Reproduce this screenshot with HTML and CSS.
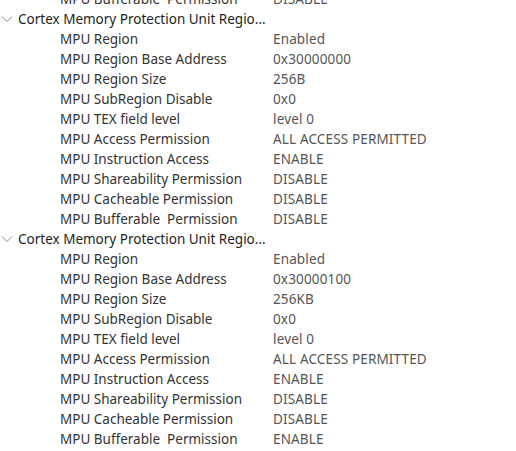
FILE: index.html
```html
<!DOCTYPE html>
<html>
<head>
<meta charset="utf-8">
<link rel="stylesheet" href="styles.css">
</head>
<body>
<div class="tree">
  <div class="row child"><span class="label">MPU Bufferable&nbsp; Permission</span><span class="value">DISABLE</span></div>

  <div class="row header">
    <svg class="chev" width="12" height="8" viewBox="0 0 12 8"><path d="M1 1.5 L6 6.5 L11 1.5" fill="none" stroke="#8a8a8a" stroke-width="1"/></svg>
    <span class="title">Cortex Memory Protection Unit Regio...</span>
  </div>
  <div class="row child"><span class="label">MPU Region</span><span class="value">Enabled</span></div>
  <div class="row child"><span class="label">MPU Region Base Address</span><span class="value">0x30000000</span></div>
  <div class="row child"><span class="label">MPU Region Size</span><span class="value">256B</span></div>
  <div class="row child"><span class="label">MPU SubRegion Disable</span><span class="value">0x0</span></div>
  <div class="row child"><span class="label">MPU TEX field level</span><span class="value">level 0</span></div>
  <div class="row child"><span class="label">MPU Access Permission</span><span class="value">ALL ACCESS PERMITTED</span></div>
  <div class="row child"><span class="label">MPU Instruction Access</span><span class="value">ENABLE</span></div>
  <div class="row child"><span class="label">MPU Shareability Permission</span><span class="value">DISABLE</span></div>
  <div class="row child"><span class="label">MPU Cacheable Permission</span><span class="value">DISABLE</span></div>
  <div class="row child"><span class="label">MPU Bufferable&nbsp; Permission</span><span class="value">DISABLE</span></div>

  <div class="row header">
    <svg class="chev" width="12" height="8" viewBox="0 0 12 8"><path d="M1 1.5 L6 6.5 L11 1.5" fill="none" stroke="#8a8a8a" stroke-width="1"/></svg>
    <span class="title">Cortex Memory Protection Unit Regio...</span>
  </div>
  <div class="row child"><span class="label">MPU Region</span><span class="value">Enabled</span></div>
  <div class="row child"><span class="label">MPU Region Base Address</span><span class="value">0x30000100</span></div>
  <div class="row child"><span class="label">MPU Region Size</span><span class="value">256KB</span></div>
  <div class="row child"><span class="label">MPU SubRegion Disable</span><span class="value">0x0</span></div>
  <div class="row child"><span class="label">MPU TEX field level</span><span class="value">level 0</span></div>
  <div class="row child"><span class="label">MPU Access Permission</span><span class="value">ALL ACCESS PERMITTED</span></div>
  <div class="row child"><span class="label">MPU Instruction Access</span><span class="value">ENABLE</span></div>
  <div class="row child"><span class="label">MPU Shareability Permission</span><span class="value">DISABLE</span></div>
  <div class="row child"><span class="label">MPU Cacheable Permission</span><span class="value">DISABLE</span></div>
  <div class="row child"><span class="label">MPU Bufferable&nbsp; Permission</span><span class="value">ENABLE</span></div>
</div>
</body>
</html>
```
FILE: styles.css
```css
html, body {
  margin: 0;
  padding: 0;
  background: #ffffff;
}
body {
  font-family: "Noto Sans", "DejaVu Sans", sans-serif;
  font-size: 13.5px;
  overflow: hidden;
}
.tree {
  margin-top: -11px;
  display: flex;
  flex-direction: column;
}
.row {
  height: 20px;
  display: flex;
  align-items: center;
  white-space: pre;
}
.header {
  padding-left: 1px;
  color: #1e1e1e;
}
.chev {
  flex: none;
  margin-right: 5px;
}
.child {
  padding-left: 60px;
}
.label {
  width: 213px;
  flex: none;
  color: #333333;
}
.value {
  color: #555555;
  letter-spacing: 0.15px;
}
```
